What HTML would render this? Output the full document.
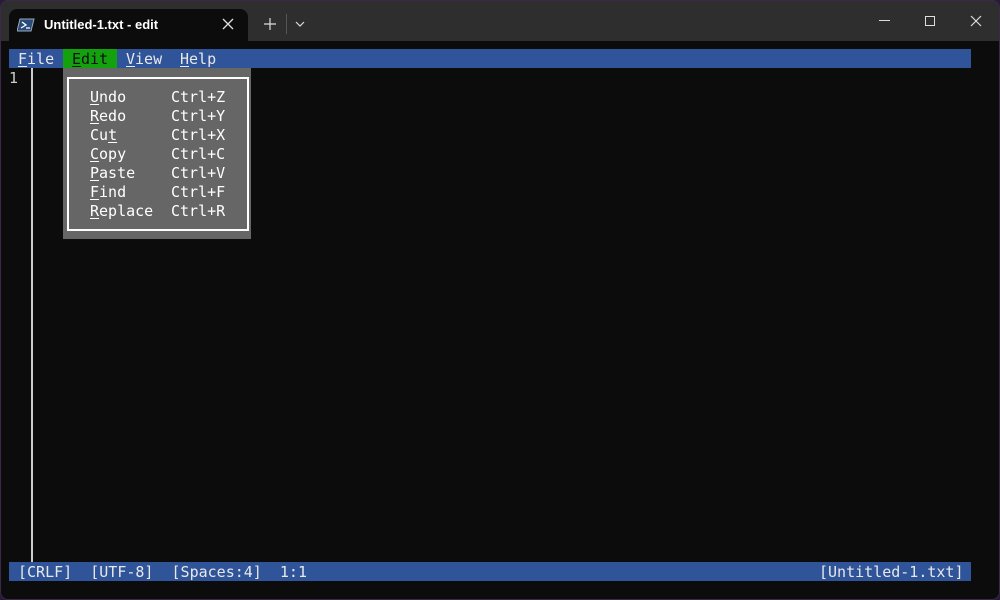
<!DOCTYPE html>
<html><head><style>
*{margin:0;padding:0;box-sizing:border-box}
body{width:1000px;height:600px;background:#2a1a3a;overflow:hidden;position:relative;font-family:"DejaVu Sans Mono","Liberation Mono",monospace}
.win{position:absolute;left:0;top:0;width:1000px;height:600px;background:#0c0c0c;border-radius:8px;overflow:hidden}
.bord{position:absolute;left:0;top:0;width:1000px;height:600px;border:1px solid #3a2a48;border-radius:8px;pointer-events:none}
.title{position:absolute;left:0;top:0;width:100%;height:41px;background:#2e2e2e}
.tab{position:absolute;left:9px;top:9px;width:239px;height:32px;background:#0c0c0c;border-radius:8px 8px 0 0}
.tt{position:absolute;color:#fff;font:600 13px "Liberation Sans",sans-serif}
.m{position:absolute;font-size:15px;line-height:19px;white-space:pre;color:#e8e8e8;padding-top:1px}
.u{text-decoration:underline;text-underline-offset:2px}
</style></head><body>
<div class="win">
<div class="title"></div>
<div class="tab"></div>
<svg style="position:absolute;left:17px;top:18px" width="18" height="14" viewBox="0 0 18 14"><path d="M3 1h14l-3 12H0z" fill="#2b4a7a" stroke="#9ab" stroke-width="1"/><path d="M5 4l4 3-5 3M9 10h4" stroke="#fff" stroke-width="1.3" fill="none"/></svg>
<div class="tt" style="left:44px;top:17px">Untitled-1.txt - edit</div>
<svg style="position:absolute;left:222px;top:18px" width="12" height="12"><path d="M1 1l10 10M11 1L1 11" stroke="#ddd" stroke-width="1.3"/></svg>
<svg style="position:absolute;left:264px;top:18px" width="12" height="12"><path d="M6 0v12M0 6h12" stroke="#ddd" stroke-width="1.2"/></svg>
<div style="position:absolute;left:286px;top:14px;width:1px;height:20px;background:#555"></div>
<svg style="position:absolute;left:295px;top:21px" width="10" height="6"><path d="M1 1l4 4 4-4" stroke="#ddd" stroke-width="1.2" fill="none"/></svg>
<div style="position:absolute;left:879px;top:20px;width:11px;height:1px;background:#ddd"></div>
<div style="position:absolute;left:925px;top:16px;width:10px;height:10px;border:1px solid #ddd"></div>
<svg style="position:absolute;left:970px;top:15px" width="12" height="12"><path d="M1 1l10 10M11 1L1 11" stroke="#ddd" stroke-width="1.2"/></svg>

<div style="position:absolute;left:9px;top:49px;width:962px;height:19px;background:#2f5499"></div>
<div style="position:absolute;left:63px;top:49px;width:54px;height:19px;background:#13a10e"></div>
<div class="m" style="left:18px;top:49px"><span class="u">F</span>ile</div>
<div class="m" style="left:72px;top:49px;color:#111"><span class="u">E</span>dit</div>
<div class="m" style="left:126px;top:49px"><span class="u">V</span>iew</div>
<div class="m" style="left:180px;top:49px"><span class="u">H</span>elp</div>

<div class="m" style="left:9px;top:68px;color:#ccc">1</div>
<div style="position:absolute;left:31px;top:68px;width:2px;height:494px;background:#ccc"></div>

<div style="position:absolute;left:63px;top:68px;width:188px;height:171px;background:#666"></div>
<div style="position:absolute;left:67px;top:77px;width:182px;height:154px;border:2px solid #fff"></div>
<div class="m" style="left:90px;top:87px;color:#fff"><span class="u">U</span>ndo
<span class="u">R</span>edo
Cu<span class="u">t</span>
<span class="u">C</span>opy
<span class="u">P</span>aste
<span class="u">F</span>ind
<span class="u">R</span>eplace</div>
<div class="m" style="left:171px;top:87px;color:#fff">Ctrl+Z
Ctrl+Y
Ctrl+X
Ctrl+C
Ctrl+V
Ctrl+F
Ctrl+R</div>

<div style="position:absolute;left:9px;top:562px;width:962px;height:19px;background:#2f5499"></div>
<div class="m" style="left:18px;top:562px">[CRLF]  [UTF-8]  [Spaces:4]  1:1</div>
<div class="m" style="left:819px;top:562px">[Untitled-1.txt]</div>
</div>
<div class="bord"></div>
</body></html>
